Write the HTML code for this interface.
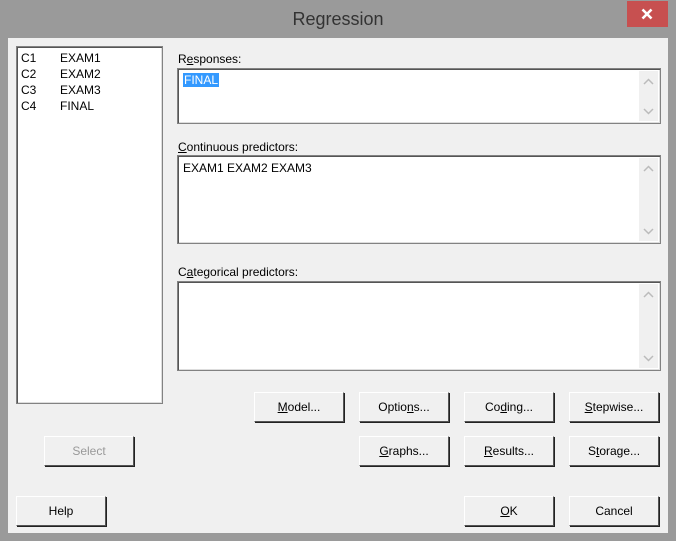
<!DOCTYPE html>
<html><head><style>
*{box-sizing:border-box;margin:0;padding:0}
body{width:676px;height:541px;background:#9a9a9a;font-family:"Liberation Sans",sans-serif;font-size:12px;color:#000;position:relative;overflow:hidden}
.title{position:absolute;left:0;top:9px;width:676px;text-align:center;font-size:18px;color:#333}
.close{position:absolute;left:627px;top:1px;width:41px;height:26px;background:#c75050}
.client{position:absolute;left:8px;top:38px;width:660px;height:495px;background:#f0f0f0}
.box{position:absolute;background:#fff;border:1px solid #828282;box-shadow:inset 1px 1px 0 #555,inset -1px -1px 0 #ddd}
.lbl{position:absolute;font-size:12px}
.sb{position:absolute;right:2px;top:2px;bottom:2px;width:19px;background:#f0f0f0}
.sb svg{position:absolute;left:4px}
.btn{position:absolute;width:90px;height:30px;background:#f0f0f0;border:1px solid #fff;border-right-color:#555;border-bottom-color:#555;box-shadow:1px 1px 0 #222;text-align:center;line-height:29px;font-size:12px}
u{text-decoration:underline}
.row{position:absolute;left:4px}
</style></head><body>
<div class="title">Regression</div>
<div class="close"><svg width="41" height="26"><path d="M15.5 8.5l9 9M24.5 8.5l-9 9" stroke="#fff" stroke-width="2.6"/></svg></div>
<div class="client">
<div class="box" style="left:8px;top:8px;width:147px;height:358px">
 <div class="row" style="top:4px">C1</div><div class="row" style="left:43px;top:4px">EXAM1</div>
 <div class="row" style="top:20px">C2</div><div class="row" style="left:43px;top:20px">EXAM2</div>
 <div class="row" style="top:36px">C3</div><div class="row" style="left:43px;top:36px">EXAM3</div>
 <div class="row" style="top:52px">C4</div><div class="row" style="left:43px;top:52px">FINAL</div>
</div>
<div class="lbl" style="left:170px;top:14px">R<u>e</u>sponses:</div>
<div class="box" style="left:169px;top:30px;width:484px;height:56px">
 <span style="position:absolute;left:5px;top:4px;background:#3399ff;color:#fff;padding:0 1px">FINAL</span>
 <div class="sb"><svg width="11" height="7" style="top:7px"><path d="M1 6l4.5-4.5L10 6" stroke="#bbb" stroke-width="1.5" fill="none"/></svg><svg width="11" height="7" style="bottom:6px"><path d="M1 1l4.5 4.5L10 1" stroke="#bbb" stroke-width="1.5" fill="none"/></svg></div>
</div>
<div class="lbl" style="left:170px;top:102px"><u>C</u>ontinuous predictors:</div>
<div class="box" style="left:169px;top:117px;width:484px;height:89px">
 <span style="position:absolute;left:5px;top:5px">EXAM1 EXAM2 EXAM3</span>
 <div class="sb"><svg width="11" height="7" style="top:7px"><path d="M1 6l4.5-4.5L10 6" stroke="#bbb" stroke-width="1.5" fill="none"/></svg><svg width="11" height="7" style="bottom:6px"><path d="M1 1l4.5 4.5L10 1" stroke="#bbb" stroke-width="1.5" fill="none"/></svg></div>
</div>
<div class="lbl" style="left:170px;top:227px">C<u>a</u>tegorical predictors:</div>
<div class="box" style="left:169px;top:243px;width:484px;height:90px">
 <div class="sb"><svg width="11" height="7" style="top:7px"><path d="M1 6l4.5-4.5L10 6" stroke="#bbb" stroke-width="1.5" fill="none"/></svg><svg width="11" height="7" style="bottom:6px"><path d="M1 1l4.5 4.5L10 1" stroke="#bbb" stroke-width="1.5" fill="none"/></svg></div>
</div>
<div class="btn" style="left:246px;top:354px"><u>M</u>odel...</div>
<div class="btn" style="left:351px;top:354px">Optio<u>n</u>s...</div>
<div class="btn" style="left:456px;top:354px">Co<u>d</u>ing...</div>
<div class="btn" style="left:561px;top:354px"><u>S</u>tepwise...</div>
<div class="btn" style="left:36px;top:398px;color:#999">Select</div>
<div class="btn" style="left:351px;top:398px"><u>G</u>raphs...</div>
<div class="btn" style="left:456px;top:398px"><u>R</u>esults...</div>
<div class="btn" style="left:561px;top:398px">S<u>t</u>orage...</div>
<div class="btn" style="left:8px;top:458px">Help</div>
<div class="btn" style="left:456px;top:458px"><u>O</u>K</div>
<div class="btn" style="left:561px;top:458px">Cancel</div>
</div>
</body></html>
